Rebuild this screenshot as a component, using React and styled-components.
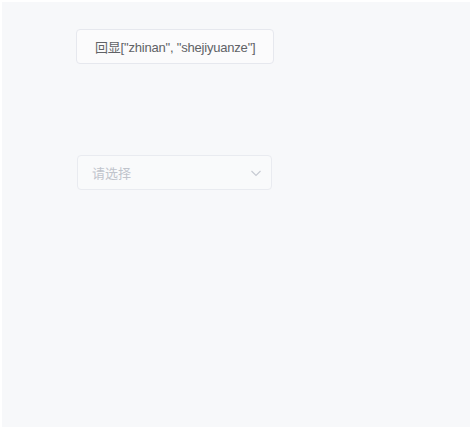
import React from 'react'
import styled, { createGlobalStyle } from 'styled-components'

const Global = createGlobalStyle`
	html, body { margin: 0; background: #fff; }
	body { font-family: "Liberation Sans", Arial, "Noto Sans CJK SC", sans-serif; }
	#root { padding: 2px; }
`

const Panel = styled.div`
	width: 468px;
	height: 425px;
	box-sizing: border-box;
	background: #f7f8fa;
	padding: 27px 0 0 74px;
	display: flex;
	flex-direction: column;
	align-items: flex-start;
	gap: 91px;
`

const Button = styled.button`
	height: 35px;
	padding: 0 18px;
	box-sizing: border-box;
	border: 1px solid #e6e8ee;
	border-radius: 4px;
	background: #fbfbfc;
	color: #606266;
	font-family: inherit;
	font-size: 13px;
	letter-spacing: -0.2px;
	cursor: pointer;
`

const Select = styled.div`
	margin-left: 1px;
	width: 195px;
	height: 35px;
	box-sizing: border-box;
	border: 1px solid #e9ebf0;
	border-radius: 4px;
	background: #f9fafb;
	display: flex;
	align-items: center;
	justify-content: space-between;
	padding: 0 9px 0 14px;
`

const Placeholder = styled.span`
	color: #c0c4cc;
	font-size: 13px;
`

const Chevron = () => (
	<svg width="12" height="12" viewBox="0 0 12 12" fill="none">
		<path d="M1.5 4l4.5 4.5L10.5 4" stroke="#c6cad2" strokeWidth="1.1"/>
	</svg>
)

const App = () => (
	<>
		<Global/>
		<Panel>
			<Button>回显["zhinan", "shejiyuanze"]</Button>
			<Select>
				<Placeholder>请选择</Placeholder>
				<Chevron/>
			</Select>
		</Panel>
	</>
)

export default App
